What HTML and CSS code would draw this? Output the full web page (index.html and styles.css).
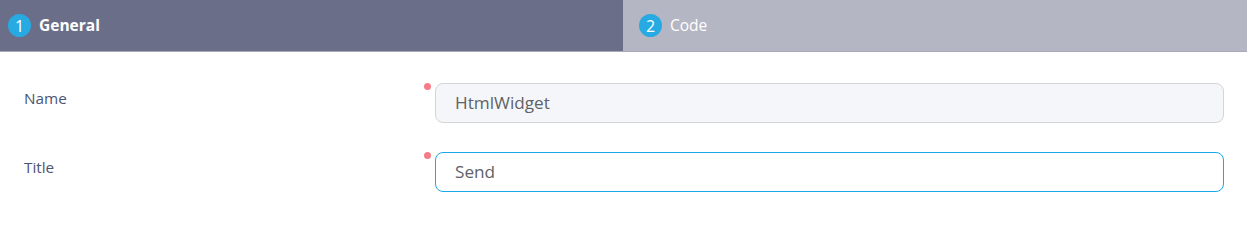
FILE: index.html
```html
<!DOCTYPE html>
<html>
<head>
<meta charset="utf-8">
<link rel="stylesheet" href="styles.css">
</head>
<body>
<div class="tabs">
  <div class="tab tab-active"><span class="badge">1</span><span class="tab-label bold">General</span></div>
  <div class="tab tab-inactive"><span class="badge">2</span><span class="tab-label">Code</span></div>
</div>
<div class="form">
  <div class="row">
    <div class="label">Name</div>
    <div class="field">
      <span class="req"></span>
      <div class="input readonly">HtmlWidget</div>
    </div>
  </div>
  <div class="row">
    <div class="label">Title</div>
    <div class="field">
      <span class="req"></span>
      <div class="input focus">Send</div>
    </div>
  </div>
</div>
</body>
</html>
```
FILE: styles.css
```css
html, body {
  margin: 0;
  padding: 0;
  background: #ffffff;
  font-family: "Open Sans", "Noto Sans", sans-serif;
}
.tabs {
  display: flex;
  height: 51px;
  border-bottom: 1px solid #a9aab7;
}
.tab {
  display: flex;
  align-items: center;
  padding-left: 8px;
  box-sizing: border-box;
  color: #ffffff;
}
.tab-active {
  width: 623px;
  background: #6b6e89;
}
.tab-inactive {
  flex: 1;
  background: #b5b6c4;
  padding-left: 16px;
}
.badge {
  width: 23px;
  height: 23px;
  border-radius: 50%;
  background: #27aae2;
  color: #fff;
  font-size: 16px;
  display: flex;
  align-items: center;
  justify-content: center;
  line-height: 1;
}
.tab-label {
  margin-left: 8px;
  font-size: 15.5px;
  margin-top: -1px;
}
.bold { font-weight: 700; }
.form {
  padding-top: 31px;
}
.row {
  display: flex;
  align-items: center;
  height: 40px;
  margin-bottom: 29px;
}
.label {
  width: 400px;
  padding-left: 24px;
  font-size: 15.3px;
  color: #4b5572;
  margin-top: -10px;
}
.field {
  position: relative;
  margin-left: 11px;
  width: 789px;
}
.req {
  position: absolute;
  left: -11px;
  top: 0px;
  width: 7px;
  height: 7px;
  border-radius: 50%;
  background: #f47c88;
}
.input {
  height: 40px;
  box-sizing: border-box;
  border-radius: 8px;
  padding-left: 19px;
  padding-bottom: 2px;
  display: flex;
  align-items: center;
  font-size: 17.2px;
  color: #606266;
}
.readonly {
  background: #f4f6f9;
  border: 1px solid #d4d5d7;
}
.focus {
  background: #fff;
  border: 1px solid #1aa8e8;
}
```
